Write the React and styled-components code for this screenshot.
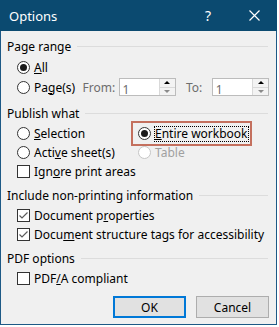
import styled, { createGlobalStyle } from "styled-components";

const Global = createGlobalStyle`
    body{
        margin: 0;
        background: #ffffff;
        font-family: "Noto Sans", "Liberation Sans", sans-serif;
        font-size: 12px;
        color: #000;
    }
`

const Window = styled.div`
    width: 277px;
    height: 325px;
    box-sizing: border-box;
    border: 1px solid #1d5986;
    border-top: none;
    background: #f0f0f0;
    display: flex;
    flex-direction: column;
`

const TitleBar = styled.div`
    height: 31px;
    margin: 0 -1px;
    background: #0b4a70;
    color: #fff;
    display: flex;
    align-items: center;
    padding: 0 0 0 9px;
    font-size: 13px;
    .title{
        flex: 1;
    }
    .help{
        width: 46px;
        text-align: center;
        font-size: 14px;
    }
    .close{
        width: 46px;
        display: flex;
        justify-content: center;
    }
`

const Body = styled.div`
    flex: 1;
    display: flex;
    flex-direction: column;
    padding: 7px 7px 0 6px;
`

const Section = styled.div`
    display: flex;
    align-items: center;
    height: 16px;
    margin-bottom: 3px;
    &::after{
        content: "";
        flex: 1;
        height: 1px;
        background: #dcdcdc;
        margin-left: 6px;
        margin-right: 1px;
    }
`

const Rows = styled.div`
    display: flex;
    flex-direction: column;
    padding-left: 10px;
    margin-bottom: ${p => p.$mb || 6}px;
`

const Grid = styled.div`
    display: grid;
    grid-template-columns: 121px auto;
    padding-left: 10px;
    margin-bottom: 6px;
`

const Row = styled.div`
    display: flex;
    align-items: center;
    height: ${p => p.$h || 19}px;
    gap: 4px;
    color: ${p => p.$disabled ? "#a0a0a0" : "#000"};
    position: relative;
    white-space: nowrap;
`

const Highlight = styled(Row)`
    justify-self: start;
    &::after{
        content: "";
        position: absolute;
        inset: -3px -4px -3px -7px;
        border: 2px solid #c4705e;
    }
    .focus{
        outline: 1px dotted #000;
        outline-offset: 0;
        line-height: 14px;
    }
`

const Radio = styled.span`
    width: 13px;
    height: 13px;
    box-sizing: border-box;
    border-radius: 50%;
    border: 1px solid ${p => p.$disabled ? "#c6c6c6" : "#333"};
    background: #fff;
    display: flex;
    align-items: center;
    justify-content: center;
    flex-shrink: 0;
    &::after{
        content: "";
        width: 7px;
        height: 7px;
        border-radius: 50%;
        background: ${p => p.$checked ? "#1a1a1a" : "transparent"};
    }
`

const Check = styled.span`
    width: 13px;
    height: 13px;
    box-sizing: border-box;
    border: 1px solid #333;
    background: #fff;
    display: flex;
    align-items: center;
    justify-content: center;
    flex-shrink: 0;
`

const Label = styled.span`
    width: ${p => p.$w}px;
`

const Dim = styled.span`
    color: #6d6d6d;
    margin-left: ${p => p.$ml || 0}px;
    width: ${p => p.$w}px;
`

const Spin = styled.div`
    width: 58px;
    height: 18px;
    box-sizing: border-box;
    border: 1px solid #bcbcbc;
    background: #fff;
    display: flex;
    .val{
        flex: 1;
        color: #6d6d6d;
        padding: 2px 0 0 3px;
    }
    .btns{
        width: 15px;
        display: flex;
        flex-direction: column;
        border-left: 1px solid #d9d9d9;
    }
`

const SpinBtn = styled.div`
    flex: 1;
    background: #f3f3f3;
    display: flex;
    align-items: center;
    justify-content: center;
    border-top: ${p => p.$down ? "1px solid #d9d9d9" : "none"};
    &::after{
        content: "";
        border-left: 3px solid transparent;
        border-right: 3px solid transparent;
        ${p => p.$down ? "border-top: 3px solid #8a8a8a;" : "border-bottom: 3px solid #000;"}
    }
`

const Footer = styled.div`
    display: flex;
    justify-content: flex-end;
    gap: 10px;
    margin-top: 2px;
`

const Button = styled.button`
    width: 73px;
    height: 22px;
    box-sizing: border-box;
    background: #e1e1e1;
    border: ${p => p.$primary ? "2px solid #0078d7" : "1px solid #adadad"};
    font-family: inherit;
    font-size: 12px;
    color: #000;
    padding: 0;
`

const CheckMark = () => (
    <svg width="11" height="11" viewBox="0 0 11 11">
        <polyline points="1.5,5.5 4,8 9.5,2.5" fill="none" stroke="#5c5c5c" strokeWidth="1.2" />
    </svg>
)

const SpinBox = () => (
    <Spin>
        <span className="val">1</span>
        <div className="btns">
            <SpinBtn />
            <SpinBtn $down />
        </div>
    </Spin>
)

const App = () => {
    return (
        <>
            <Global />
            <Window>
                <TitleBar>
                    <span className="title">Options</span>
                    <span className="help">?</span>
                    <span className="close">
                        <svg width="11" height="11" viewBox="0 0 11 11">
                            <path d="M0.5 0.5 L10.5 10.5 M10.5 0.5 L0.5 10.5" stroke="#fff" strokeWidth="1.2" />
                        </svg>
                    </span>
                </TitleBar>
                <Body>
                    <Section>Page range</Section>
                    <Rows $mb={8}>
                        <Row $h={20}><Radio $checked /><span><u>A</u>ll</span></Row>
                        <Row $h={20}>
                            <Radio /><Label $w={45}>Pa<u>g</u>e(s)</Label>
                            <Dim $w={32}>From:</Dim>
                            <SpinBox />
                            <Dim $ml={6} $w={22}>To:</Dim>
                            <SpinBox />
                        </Row>
                    </Rows>
                    <Section>Publish what</Section>
                    <Grid>
                        <Row><Radio /><span><u>S</u>election</span></Row>
                        <Highlight><Radio $checked /><span className="focus"><u>E</u>ntire workbook</span></Highlight>
                        <Row><Radio /><span>Acti<u>v</u>e sheet(s)</span></Row>
                        <Row $disabled><Radio $disabled /><span>Table</span></Row>
                        <Row><Check /><span>Ign<u>o</u>re print areas</span></Row>
                    </Grid>
                    <Section>Include non-printing information</Section>
                    <Rows>
                        <Row><Check><CheckMark /></Check><span>Document p<u>r</u>operties</span></Row>
                        <Row><Check><CheckMark /></Check><span>Docu<u>m</u>ent structure tags for accessibility</span></Row>
                    </Rows>
                    <Section>PDF options</Section>
                    <Rows>
                        <Row><Check /><span>PDF<u>/</u>A compliant</span></Row>
                    </Rows>
                    <Footer>
                        <Button $primary>OK</Button>
                        <Button>Cancel</Button>
                    </Footer>
                </Body>
            </Window>
        </>
    );
}

export default App;
